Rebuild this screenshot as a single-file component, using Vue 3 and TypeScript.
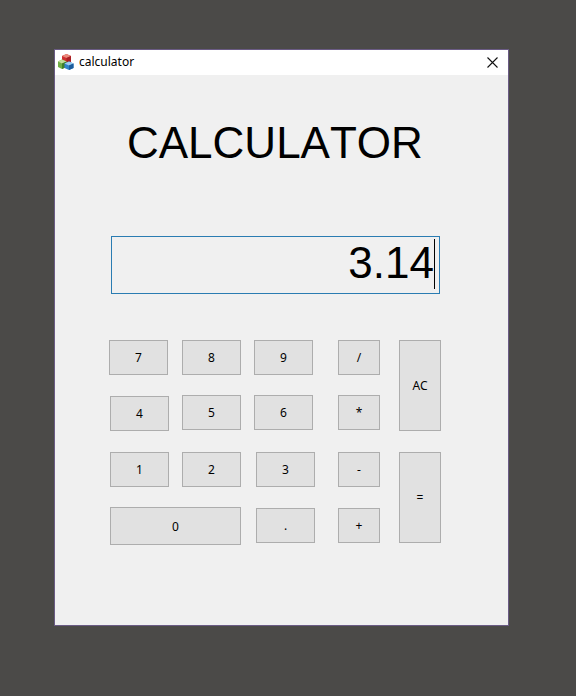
<script setup lang="ts">
interface Key {
  label: string
  cls?: string
}

// order follows the grid: row by row, AC and = span two rows
const keys: Key[] = [
  { label: '7' },
  { label: '8' },
  { label: '9' },
  { label: '/', cls: 'op' },
  { label: 'AC', cls: 'op tall' },
  { label: '4', cls: 'right1 down1' },
  { label: '5' },
  { label: '6' },
  { label: '*', cls: 'op' },
  { label: '1', cls: 'right1' },
  { label: '2' },
  { label: '3', cls: 'right2' },
  { label: '-', cls: 'op' },
  { label: '=', cls: 'op tall' },
  { label: '0', cls: 'zero right1' },
  { label: '.', cls: 'right2 down1' },
  { label: '+', cls: 'op down1' },
]
</script>

<template>
  <div class="desktop">
    <div class="window">
      <div class="titlebar">
        <svg class="app-icon" width="16" height="16" viewBox="0 0 16 16">
          <path d="M4 2 8.500 0 13 2 13 7.500 8.500 10 4 7.500z" fill="#cf2f2f" />
          <path d="M4 2 8.500 4 13 2 8.500 0z" fill="#e98a7c" />
          <path d="M8.500 4 13 2 13 7.500 8.500 10z" fill="#a81f24" />
          <path d="M0 7.500 4 5.500 8.500 7.500 8.500 13 4 15 0 13z" fill="#6fae45" />
          <path d="M0 7.500 4 9.500 8.500 7.500 4 5.500z" fill="#c3dd9a" />
          <path d="M4 9.500 8.500 7.500 8.500 13 4 15z" fill="#3f7f2a" />
          <path d="M6.500 9.500 11 7.500 15.500 9.500 15.500 14 11 16 6.500 14z" fill="#2f83c9" />
          <path d="M6.500 9.500 11 11.500 15.500 9.500 11 7.500z" fill="#9ccdf0" />
          <path d="M11 11.500 15.500 9.500 15.500 14 11 16z" fill="#1c5c9c" />
        </svg>
        <span class="app-name">calculator</span>
        <svg class="close" width="11" height="11" viewBox="0 0 11 11">
          <path d="M0.500 0.500 10.500 10.500M10.500 0.500 0.500 10.500" stroke="#111" stroke-width="1.100" fill="none" />
        </svg>
      </div>
      <div class="content">
        <h1 class="heading">CALCULATOR</h1>
        <div class="display">3.14<span class="caret"></span></div>
        <div class="keypad">
          <button v-for="k in keys" :key="k.label" :class="['key', k.cls]">{{ k.label }}</button>
        </div>
      </div>
    </div>
  </div>
</template>

<style scoped>
.desktop {
  width: 576px;
  height: 696px;
  box-sizing: border-box;
  padding: 49px 0 0 54px;
  background-color: #4b4a48;
}

.window {
  width: 455px;
  height: 577px;
  box-sizing: border-box;
  border: 1px solid #6a5b84;
  background-color: #f0f0f0;
}

.titlebar {
  height: 25px;
  display: flex;
  align-items: center;
  padding: 0 10px 2px 3px;
  box-sizing: border-box;
  background-color: #fff;
}

.app-icon {
  margin-right: 5px;
}

.app-name {
  font-family: "Noto Sans", sans-serif;
  font-size: 12px;
  color: #000;
}

.close {
  margin-left: auto;
  margin-top: 2px;
}

.content {
  padding-left: 54px;
}

.heading {
  width: 296px;
  margin: 42px 0 0 18px;
  font-family: "Liberation Sans", Arial, sans-serif;
  font-size: 44px;
  font-kerning: none;
  line-height: 52px;
  font-weight: 400;
  color: #000;
  white-space: nowrap;
}

.display {
  width: 329px;
  height: 58px;
  box-sizing: border-box;
  margin: 67px 0 0 2px;
  padding: 0 4px 4px 0;
  border: 1px solid #2a7cb2;
  display: flex;
  align-items: center;
  justify-content: flex-end;
  font-family: "Liberation Sans", Arial, sans-serif;
  font-size: 44px;
  color: #000;
}

.caret {
  width: 1px;
  height: 50px;
  margin-top: 2px;
  background-color: #000;
}

.keypad {
  display: grid;
  grid-template-columns: 73px 72px 84px 61px 42px;
  grid-template-rows: 55px 57px 55px 38px;
  margin-top: 46px;
}

.key {
  width: 59px;
  height: 35px;
  box-sizing: border-box;
  padding: 0;
  border: 1px solid #adadad;
  background-color: #e1e1e1;
  font-family: "Noto Sans", sans-serif;
  font-size: 12px;
  color: #000;
}

.op {
  width: 42px;
}

.tall {
  grid-row: span 2;
  height: 91px;
}

.zero {
  grid-column: span 2;
  width: 131px;
  height: 38px;
}

.right1 {
  margin-left: 1px;
}

.right2 {
  margin-left: 2px;
}

.down1 {
  margin-top: 1px;
}
</style>

<style>
html,
body {
  margin: 0;
  background-color: #4b4a48;
}
</style>
